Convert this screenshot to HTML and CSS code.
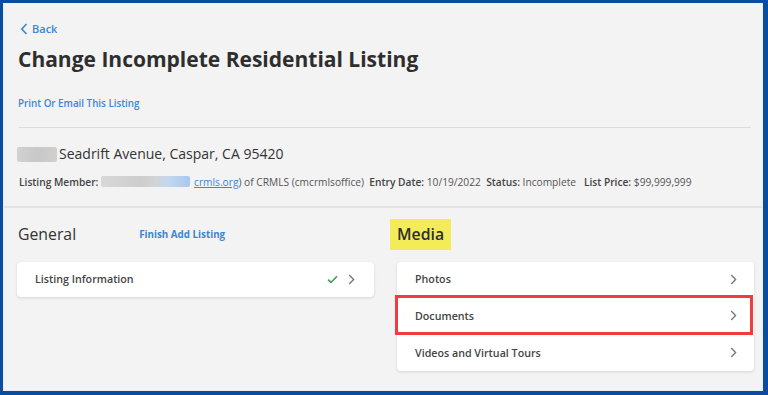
FILE: index.html
```html
<!DOCTYPE html>
<html>
<head>
<meta charset="utf-8">
<link rel="stylesheet" href="styles.css">
</head>
<body>
<div class="frame">
  <div class="inner">
    <div class="top">
      <a class="back"><svg class="back-ico" width="8" height="12" viewBox="0 0 8 12"><path d="M6.5 1 L1.8 6 L6.5 11" fill="none" stroke="#3b86d9" stroke-width="1.6"/></svg>Back</a>
      <h1 class="title">Change Incomplete Residential Listing</h1>
      <a class="print">Print Or Email This Listing</a>
      <div class="rule"></div>
      <div class="address"><span class="blur blur-num"></span>Seadrift Avenue, Caspar, CA 95420</div>
      <div class="meta">
        <b>Listing Member:</b> <span class="blur blur-mail"></span><span class="mail">crmls.org</span>) of CRMLS (cmcrmlsoffice)&nbsp; <b>Entry Date:</b> 10/19/2022&nbsp; <b>Status:</b> Incomplete &nbsp; <b>List Price:</b> $99,999,999
      </div>
    </div>
    <div class="divider"></div>
    <div class="sections">
      <section class="col">
        <div class="col-head">
          <h2 class="col-title">General</h2>
          <a class="finish">Finish Add Listing</a>
        </div>
        <div class="card">
          <div class="row">
            <span class="row-label">Listing Information</span>
            <span class="row-icons">
              <svg width="11" height="9" viewBox="0 0 11 9"><path d="M1 4.6 L4 7.4 L10 1.2" fill="none" stroke="#3b9a4a" stroke-width="1.5"/></svg>
              <svg width="7" height="11" viewBox="0 0 7 11"><path d="M1.2 1 L5.6 5.5 L1.2 10" fill="none" stroke="#7a7a7a" stroke-width="1.4"/></svg>
            </span>
          </div>
        </div>
      </section>
      <section class="col">
        <div class="col-head">
          <h2 class="col-title media">Media</h2>
        </div>
        <div class="card">
          <div class="row row-first">
            <span class="row-label">Photos</span>
            <svg width="7" height="11" viewBox="0 0 7 11"><path d="M1.2 1 L5.6 5.5 L1.2 10" fill="none" stroke="#7a7a7a" stroke-width="1.4"/></svg>
          </div>
          <div class="row row-tall marked">
            <span class="row-label">Documents</span>
            <svg width="7" height="11" viewBox="0 0 7 11"><path d="M1.2 1 L5.6 5.5 L1.2 10" fill="none" stroke="#7a7a7a" stroke-width="1.4"/></svg>
          </div>
          <div class="row row-tall">
            <span class="row-label">Videos and Virtual Tours</span>
            <svg width="7" height="11" viewBox="0 0 7 11"><path d="M1.2 1 L5.6 5.5 L1.2 10" fill="none" stroke="#7a7a7a" stroke-width="1.4"/></svg>
          </div>
        </div>
      </section>
    </div>
  </div>
</div>
</body>
</html>
```

FILE: styles.css
```css
* { box-sizing: border-box; }
html, body { margin: 0; padding: 0; }
body {
  width: 768px;
  height: 395px;
  overflow: hidden;
  font-family: "Open Sans", "Noto Sans", sans-serif;
  color: #333;
}
.frame {
  width: 768px;
  height: 395px;
  background: #0b4c9e;
  padding: 3px 5px 4px 3px;
}
.inner {
  height: 100%;
  background: #f3f3f3;
  border: 1px solid #e9edf3;
  border-top: none;
  overflow: hidden;
}
.top {
  padding: 0 11px 0 14px;
}
.back {
  display: flex;
  align-items: center;
  gap: 4px;
  margin-top: 19px;
  height: 14px;
  line-height: 14px;
  font-size: 11px;
  font-weight: 600;
  color: #3b86d9;
  padding-left: 2px;
}
.title {
  margin: 7px 0 0;
  height: 32px;
  line-height: 32px;
  font-size: 21px;
  font-weight: 700;
  color: #2e2e2e;
}
.print {
  display: block;
  margin-top: 22px;
  height: 14px;
  line-height: 14px;
  font-size: 9.8px;
  font-weight: 600;
  color: #3b86d9;
}
.rule {
  margin-top: 16px;
  height: 1px;
  background: #dcdcdc;
  margin-left: 1px;
}
.address {
  display: flex;
  align-items: center;
  margin-top: 16px;
  height: 20px;
  line-height: 20px;
  font-size: 14px;
  color: #333;
}
.blur {
  display: inline-block;
  border-radius: 2px;
}
.blur-num {
  width: 40px;
  height: 15px;
  margin-right: 2px;
  margin-left: -1px;
  background: linear-gradient(90deg, #d2d2d2, #c8c8c8 50%, #cfcfcf);
}
.meta {
  margin-top: 11px;
  height: 14px;
  line-height: 14px;
  font-size: 10.2px;
  color: #555;
  white-space: nowrap;
  padding-left: 1px;
}
.meta b { font-weight: 600; color: #444; }
.blur-mail {
  width: 89px;
  height: 11px;
  vertical-align: -1px;
  background: linear-gradient(90deg, #d8d8d8, #cdcdcd 45%, #d3d3d3 60%, #c3d7ef 75%, #a9c8ee);
}
.mail {
  color: #3b86d9;
  text-decoration: underline;
  margin-left: 4px;
}
.divider {
  margin-top: 17px;
  height: 2px;
  background: #e3e3e3;
}
.sections {
  display: grid;
  grid-template-columns: 357px 357px;
  column-gap: 23px;
  padding-left: 13px;
  margin-top: 11px;
}
.col-head {
  display: flex;
  align-items: center;
  height: 31px;
  margin-bottom: 12px;
}
.col-title {
  margin: 0;
  font-size: 15.8px;
  font-weight: 400;
  color: #333;
  line-height: 31px;
  padding-left: 1px;
}
.col-title.media {
  background: #f3ec58;
  font-weight: 600;
  color: #2e2e2e;
  margin-left: -7px;
  padding: 0 7px 0 7px;
}
.finish {
  margin-left: 63px;
  font-size: 9.8px;
  font-weight: 700;
  color: #3b86d9;
}
.card {
  background: #fff;
  border-radius: 4px;
  box-shadow: 0 1px 3px rgba(0, 0, 0, 0.13);
}
.row {
  display: flex;
  align-items: center;
  justify-content: space-between;
  height: 35px;
  padding: 0 19px 1px 18px;
}
.row-first, .row-tall {
  padding-right: 17px;
}
.row-tall { height: 37px; padding-bottom: 0; }
.row-label {
  font-size: 10.7px;
  font-weight: 600;
  color: #444;
}
.row-icons {
  display: flex;
  align-items: center;
  gap: 10px;
}
.marked {
  position: relative;
}
.marked::after {
  content: "";
  position: absolute;
  top: -2px;
  left: -2px;
  right: 1px;
  bottom: -1px;
  border: 3px solid #f23b40;
}
```
